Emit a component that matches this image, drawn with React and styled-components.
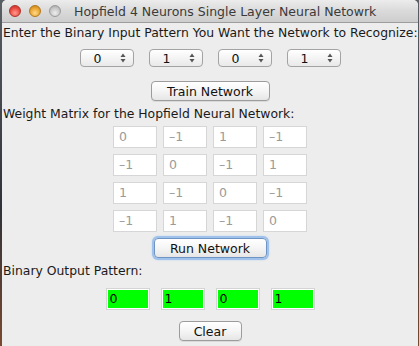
import React from 'react';
import styled, { createGlobalStyle } from 'styled-components';

const GlobalStyle = createGlobalStyle`
    html, body {
        margin: 0;
        padding: 0;
        background: #3b3f45;
        font-family: "DejaVu Sans", "Liberation Sans", sans-serif;
    }
`

const Desktop = styled.div`
    width: 419px;
    height: 346px;
    padding-left: 2px;
    box-sizing: border-box;
    overflow: hidden;
    background: linear-gradient(180deg, #5a5f66 0%, #2f3238 60%, #7a4a30 100%);
`

const Window = styled.div`
    width: 416px;
    height: 346px;
    background: #ededed;
    border-radius: 5px 5px 0 0;
    overflow: hidden;
    display: flex;
    flex-direction: column;
`

const TitleBar = styled.div`
    height: 22px;
    flex: none;
    display: flex;
    align-items: center;
    padding-left: 7px;
    background: linear-gradient(180deg, #ececec 0%, #dadada 50%, #cdcdcd 100%);
    border-bottom: 1px solid #9d9d9d;
`

const Light = styled.div`
    width: 12px;
    height: 12px;
    border-radius: 50%;
    margin-right: 8px;
    box-sizing: border-box;
    border: 1px solid ${p => p.$edge};
    background: radial-gradient(circle at 50% 70%, ${p => p.$glow} 0%, ${p => p.$color} 60%, ${p => p.$edge} 100%);
`

const Title = styled.div`
    margin-left: 5px;
    font-size: 12.5px;
    color: #3a3a3a;
`

const Content = styled.div`
    display: flex;
    flex-direction: column;
    align-items: center;
`

const Label = styled.div`
    align-self: flex-start;
    padding-left: 1px;
    font-size: 12.4px;
    line-height: 16px;
    color: #1a1a1a;
    margin-top: ${p => p.$top}px;
    white-space: nowrap;
`

const SpinRow = styled.div`
    display: flex;
    gap: 15px;
    margin-top: 8px;
`

const Spinner = styled.div`
    width: 54px;
    height: 18px;
    box-sizing: border-box;
    border: 1px solid #a3a3a3;
    border-radius: 4px;
    background: linear-gradient(180deg, #ffffff 0%, #f4f4f4 50%, #e9e9e9 100%);
    display: flex;
    align-items: center;
    font-size: 12.5px;
    color: #111;
`

const SpinValue = styled.div`
    width: 34px;
    text-align: center;
`

const Arrows = styled.svg`
    margin-left: 5px;
`

const Button = styled.div`
    width: ${p => p.$w}px;
    height: 20px;
    box-sizing: border-box;
    margin-top: ${p => p.$top}px;
    border: 1px solid ${p => (p.$focus ? '#6d94c5' : '#9c9c9c')};
    border-radius: 4px;
    background: linear-gradient(180deg, #ffffff 0%, #f5f5f5 50%, #e6e6e6 100%);
    box-shadow: ${p => (p.$focus ? '0 0 0 2px #9fc1ea, 0 0 2px 2px #b9d3f1' : '0 1px 0 rgba(0,0,0,0.08)')};
    display: flex;
    align-items: center;
    justify-content: center;
    font-size: 12.5px;
    color: #111;
`

const Matrix = styled.div`
    display: grid;
    grid-template-columns: repeat(4, 44px);
    grid-auto-rows: 22px;
    column-gap: 6px;
    row-gap: 6px;
    margin-top: 4px;
`

const Cell = styled.div`
    box-sizing: border-box;
    border: 1px solid #d6d6d6;
    background: #ffffff;
    padding-left: 5px;
    font-size: 12.5px;
    line-height: 20px;
    color: #9a9a9a;
`

const OutputRow = styled.div`
    display: flex;
    gap: 11px;
    margin-top: 9px;
`

const Output = styled.div`
    width: 44px;
    height: 22px;
    box-sizing: border-box;
    border: 1px solid #d4d4d4;
    padding: 1px;
    background: #ffffff;
`

const OutputFill = styled.div`
    height: 100%;
    background: #00ff00;
    padding-left: 2px;
    font-size: 12.5px;
    line-height: 18px;
    color: #000;
`

const inputs = [0, 1, 0, 1]

const weights = [
    [0, -1, 1, -1],
    [-1, 0, -1, 1],
    [1, -1, 0, -1],
    [-1, 1, -1, 0],
]

const outputs = [0, 1, 0, 1]

const fmt = v => (v < 0 ? '\u2013' + Math.abs(v) : String(v))

function App() {
    return (
        <Desktop>
            <GlobalStyle />
            <Window>
                <TitleBar>
                    <Light $color="#e9463f" $glow="#ff9a8c" $edge="#b03028" />
                    <Light $color="#e8a22c" $glow="#ffd98a" $edge="#b2771c" />
                    <Light $color="#c4c4c4" $glow="#eeeeee" $edge="#9a9a9a" />
                    <Title>Hopfield 4 Neurons Single Layer Neural Netowrk</Title>
                </TitleBar>
                <Content>
                    <Label $top={2}>Enter the Binary Input Pattern You Want the Network to Recognize:</Label>
                    <SpinRow>
                        {inputs.map((v, i) => (
                            <Spinner key={i}>
                                <SpinValue>{v}</SpinValue>
                                <Arrows width="6" height="10" viewBox="0 0 6 10">
                                    <path d="M3 0.5 L5.5 4 L0.5 4 Z" fill="#555" />
                                    <path d="M3 9.5 L5.5 6 L0.5 6 Z" fill="#555" />
                                </Arrows>
                            </Spinner>
                        ))}
                    </SpinRow>
                    <Button $w={119} $top={14}>Train Network</Button>
                    <Label $top={5}>Weight Matrix for the Hopfield Neural Network:</Label>
                    <Matrix>
                        {weights.flat().map((v, i) => (
                            <Cell key={i}>{fmt(v)}</Cell>
                        ))}
                    </Matrix>
                    <Button $w={113} $top={6} $focus>Run Network</Button>
                    <Label $top={5}>Binary Output Pattern:</Label>
                    <OutputRow>
                        {outputs.map((v, i) => (
                            <Output key={i}>
                                <OutputFill>{v}</OutputFill>
                            </Output>
                        ))}
                    </OutputRow>
                    <Button $w={63} $top={11}>Clear</Button>
                </Content>
            </Window>
        </Desktop>
    )
}

export default App;
